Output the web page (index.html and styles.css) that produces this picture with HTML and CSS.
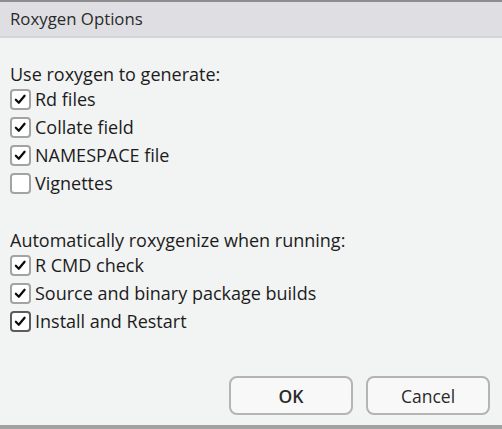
FILE: index.html
```html
<!DOCTYPE html>
<html lang="en">
<head>
    <meta charset="UTF-8">
    <title>Roxygen Options</title>
    <link rel="stylesheet" href="styles.css">
</head>
<body>
    <div class="dialog">
        <div class="title-bar">Roxygen Options</div>
        <div class="content">
            <div class="group">
                <div class="group-label">Use roxygen to generate:</div>
                <label class="option"><span class="box checked"><svg viewBox="0 0 20 20"><path d="M4.5 10.2 L8 13.8 L14.8 5.6"/></svg></span>Rd files</label>
                <label class="option"><span class="box checked"><svg viewBox="0 0 20 20"><path d="M4.5 10.2 L8 13.8 L14.8 5.6"/></svg></span>Collate field</label>
                <label class="option"><span class="box checked"><svg viewBox="0 0 20 20"><path d="M4.5 10.2 L8 13.8 L14.8 5.6"/></svg></span>NAMESPACE file</label>
                <label class="option"><span class="box"></span>Vignettes</label>
            </div>
            <div class="group">
                <div class="group-label">Automatically roxygenize when running:</div>
                <label class="option"><span class="box checked"><svg viewBox="0 0 20 20"><path d="M4.5 10.2 L8 13.8 L14.8 5.6"/></svg></span>R CMD check</label>
                <label class="option"><span class="box checked"><svg viewBox="0 0 20 20"><path d="M4.5 10.2 L8 13.8 L14.8 5.6"/></svg></span>Source and binary package builds</label>
                <label class="option"><span class="box checked focused"><svg viewBox="0 0 20 20"><path d="M4.5 10.2 L8 13.8 L14.8 5.6"/></svg></span>Install and Restart</label>
            </div>
        </div>
        <div class="buttons">
            <button class="btn primary">OK</button>
            <button class="btn">Cancel</button>
        </div>
    </div>
</body>
</html>
```

FILE: styles.css
```css
html, body {
  margin: 0;
  height: 100%;
}

body {
  background-color: #f2f3f3;
  font-family: "Open Sans", "Noto Sans", sans-serif;
  color: #1c1c1c;
}

.dialog {
  height: 100%;
  box-sizing: border-box;
  display: flex;
  flex-direction: column;
  border-top: 2px solid #8e8e90;
  border-bottom: 4px solid #a2a2a2;
}

.title-bar {
  height: 34px;
  line-height: 34px;
  padding-left: 10px;
  background-color: #dfdfe3;
  border-bottom: 2px solid #d6d6da;
  font-size: 16.8px;
  color: #2a2a2a;
}

.content {
  padding: 25px 0 0 10px;
  display: flex;
  flex-direction: column;
  gap: 32px;
}

.group {
  display: flex;
  flex-direction: column;
}

.group-label {
  height: 22px;
  line-height: 22px;
  font-size: 18px;
}

.option {
  height: 28px;
  display: flex;
  align-items: center;
  gap: 4px;
  font-size: 18px;
}

.box {
  width: 17px;
  height: 17px;
  border: 2px solid #a3a3a3;
  border-radius: 4px;
  background-color: #fff;
  display: flex;
}

.box svg {
  width: 17px;
  height: 17px;
}

.box path {
  fill: none;
  stroke: #0a0a0a;
  stroke-width: 2.6;
  stroke-linecap: round;
  stroke-linejoin: round;
}

.box.focused {
  border-color: #5c5c5c;
}

.buttons {
  margin-top: auto;
  display: flex;
  justify-content: flex-end;
  gap: 13px;
  padding: 0 12px 10px 0;
}

.btn {
  width: 124px;
  height: 39px;
  border: 2px solid #b4b4b4;
  border-radius: 8px;
  background-color: #f8f8f8;
  font-family: inherit;
  font-size: 17.5px;
  color: #2a2a2a;
}

.btn.primary {
  font-weight: 600;
}
```
